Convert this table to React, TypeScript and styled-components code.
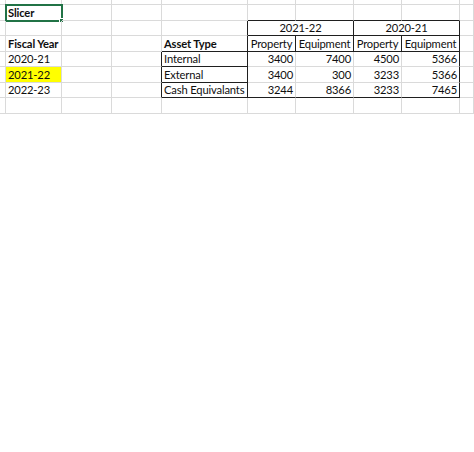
import React from "react";
import styled, { createGlobalStyle, css } from "styled-components";

const Global = createGlobalStyle`
  html, body { margin: 0; padding: 0; background: #ffffff; }
  body { font-family: Lato, "Liberation Sans", sans-serif; }
`;

const Sheet = styled.div`
  display: grid;
  grid-template-columns: 6px 56px 50px 50px 86px 48px 58px 48px 58px 1fr;
  grid-template-rows: 5px 16px 15px 16px 15px 16px 15px 16px;
  width: 474px;
`;

type CellProps = {
  $r?: boolean;
  $b?: boolean;
  $bold?: boolean;
  $align?: "left" | "center" | "right";
  $bg?: string;
  $span?: number;
  $sel?: boolean;
};

const Cell = styled.div<CellProps>`
  box-sizing: border-box;
  position: relative;
  display: flex;
  align-items: flex-end;
  justify-content: ${(p) =>
    p.$align === "right" ? "flex-end" : p.$align === "center" ? "center" : "flex-start"};
  padding: 0 2px 1px 2px;
  border-right: 1px solid ${(p) => (p.$r ? "#1f1f1f" : "#dadada")};
  border-bottom: 1px solid ${(p) => (p.$b ? "#1f1f1f" : "#dadada")};
  background: ${(p) => p.$bg || "transparent"};
  grid-column: span ${(p) => p.$span || 1};
  font-size: 11.2px;
  letter-spacing: -0.15px;
  line-height: 13px;
  font-weight: ${(p) => (p.$bold ? 700 : 400)};
  color: #0f0f0f;
  white-space: nowrap;
  overflow: visible;
  ${(p) =>
    p.$sel &&
    css`
      outline: 2px solid #217346;
      outline-offset: -1px;
      &::after {
        content: "";
        position: absolute;
        right: -3px;
        bottom: -3px;
        width: 5px;
        height: 5px;
        background: #217346;
        border: 1px solid #ffffff;
        box-sizing: border-box;
      }
    `}
`;

type Spec = {
  t?: string;
  span?: number;
  r?: boolean;
  b?: boolean;
  bold?: boolean;
  align?: "left" | "center" | "right";
  bg?: string;
  sel?: boolean;
};

const E: Spec = {};
const blank = (n: number): Spec[] => Array.from({ length: n }, () => ({}));

const rows: Spec[][] = [
  blank(10),
  [E, { t: "Slicer", bold: true, sel: true }, E, E, E, { b: true }, { b: true }, { b: true }, { b: true }, E],
  [
    E, E, E, E, { r: true },
    { t: "2021-22", span: 2, align: "center", r: true, b: true },
    { t: "2020-21", span: 2, align: "center", r: true, b: true },
    E,
  ],
  [
    E, { t: "Fiscal Year", bold: true }, E, E,
    { t: "Asset Type", bold: true, r: true, b: true },
    { t: "Property", align: "center", r: true, b: true },
    { t: "Equipment", align: "center", r: true, b: true },
    { t: "Property", align: "center", r: true, b: true },
    { t: "Equipment", align: "center", r: true, b: true },
    E,
  ],
  [
    E, { t: "2020-21" }, E, { r: true },
    { t: "Internal", r: true, b: true },
    { t: "3400", align: "right" },
    { t: "7400", align: "right" },
    { t: "4500", align: "right" },
    { t: "5366", align: "right", r: true },
    E,
  ],
  [
    E, { t: "2021-22", bg: "#ffff00" }, E, { r: true },
    { t: "External", r: true, b: true },
    { t: "3400", align: "right" },
    { t: "300", align: "right" },
    { t: "3233", align: "right" },
    { t: "5366", align: "right", r: true },
    E,
  ],
  [
    E, { t: "2022-23" }, E, { r: true },
    { t: "Cash Equivalants", r: true, b: true },
    { t: "3244", align: "right", b: true },
    { t: "8366", align: "right", b: true },
    { t: "3233", align: "right", b: true },
    { t: "7465", align: "right", r: true, b: true },
    E,
  ],
  blank(10),
];

export default function App() {
  return (
    <>
      <Global />
      <Sheet>
        {rows.map((row, ri) =>
          row.map((c, ci) => (
            <Cell
              key={`${ri}-${ci}`}
              $r={c.r}
              $b={c.b}
              $bold={c.bold}
              $align={c.align}
              $bg={c.bg}
              $span={c.span}
              $sel={c.sel}
            >
              {c.t}
            </Cell>
          ))
        )}
      </Sheet>
    </>
  );
}
